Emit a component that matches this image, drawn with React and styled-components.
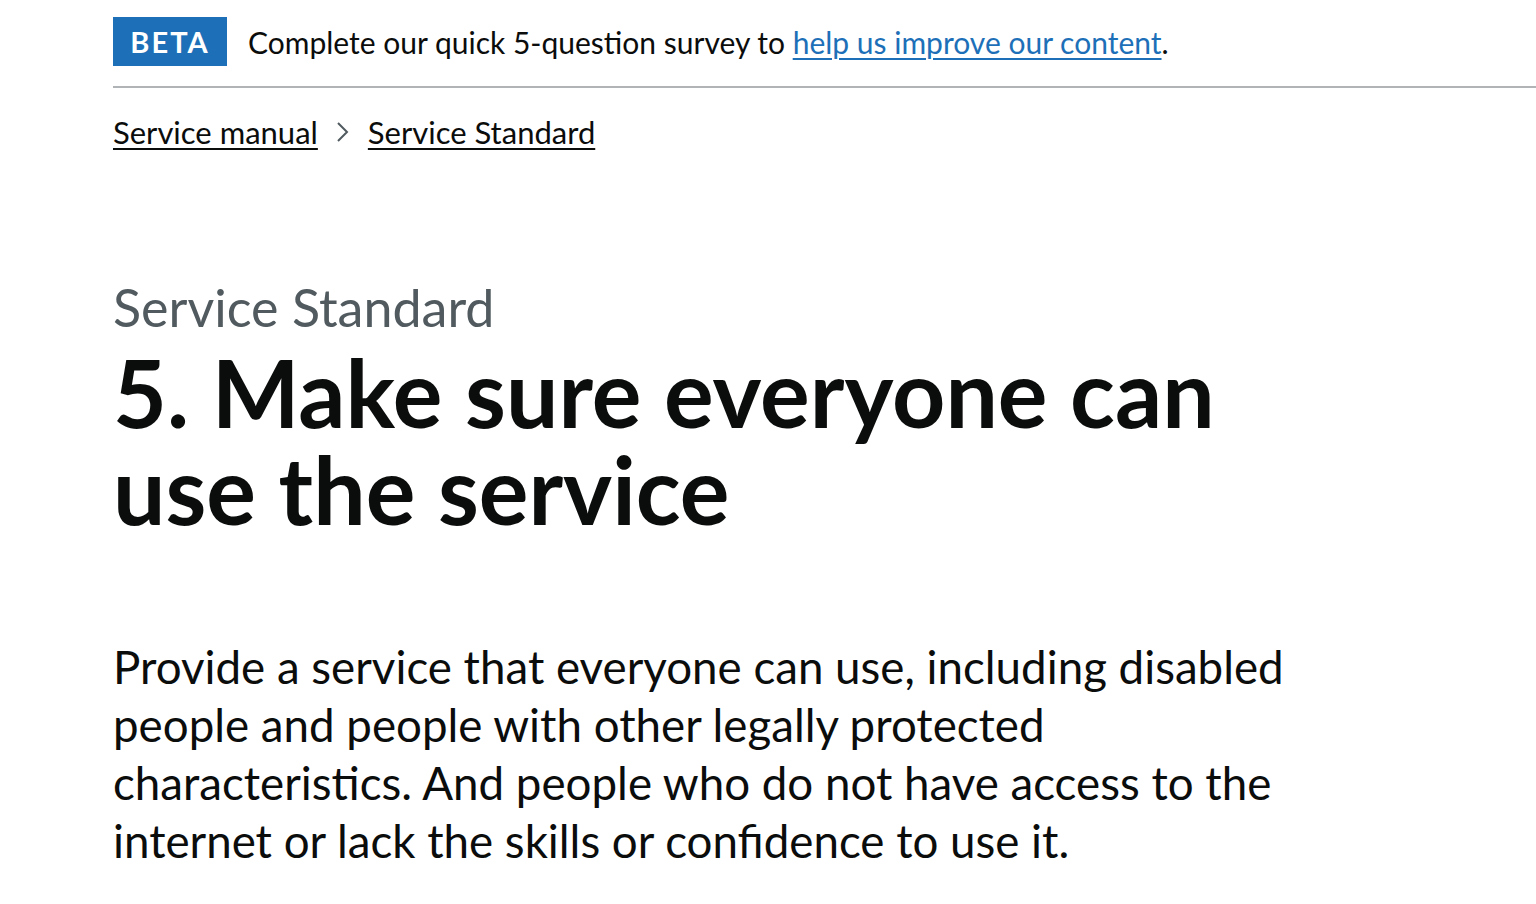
import React from 'react';
import styled, { createGlobalStyle } from 'styled-components';

const GlobalStyle = createGlobalStyle`
  html, body {
    margin: 0;
    padding: 0;
    background: #ffffff;
  }
  body {
    font-family: Lato, "Noto Sans", "Liberation Sans", Arial, sans-serif;
    color: #0b0c0c;
    -webkit-font-smoothing: antialiased;
  }
`;

const Page = styled.div`
  padding-left: 113px;
  overflow: hidden;
`;

const PhaseBanner = styled.div`
  display: flex;
  align-items: center;
  gap: 21px;
  padding: 17px 0 20px;
  border-bottom: 2px solid #b1b4b6;
`;

const Tag = styled.strong`
  display: inline-flex;
  align-items: center;
  justify-content: center;
  width: 114px;
  height: 49px;
  box-sizing: border-box;
  background: #1d70b8;
  color: #ffffff;
  font-size: 29px;
  font-weight: 700;
  letter-spacing: 2px;
`;

const BannerText = styled.span`
  font-size: 30px;
  line-height: 1;
  color: #0b0c0c;
`;

const Link = styled.a`
  color: ${p => (p.$plain ? '#0b0c0c' : '#1d70b8')};
  text-decoration: underline;
  text-decoration-thickness: 2px;
  text-underline-offset: 4px;
`;

const Breadcrumbs = styled.nav`
  display: flex;
  align-items: center;
  gap: 18px;
  margin-top: 25px;
  font-size: 31px;
  line-height: 38px;
`;

const Chevron = styled.svg`
  width: 14px;
  height: 22px;
  flex-shrink: 0;
`;

const Caption = styled.span`
  display: block;
  margin-top: 127px;
  font-size: 52px;
  line-height: 58px;
  color: #505a5f;
`;

const Heading = styled.h1`
  margin: 8px 0 0;
  max-width: 1200px;
  font-size: 93px;
  line-height: 97px;
  font-weight: 700;
`;

const Lead = styled.p`
  margin: 100px 0 0;
  max-width: 1200px;
  font-size: 45.7px;
  line-height: 58px;
`;

export default function App() {
  return (
    <Page>
      <GlobalStyle />
      <PhaseBanner>
        <Tag>BETA</Tag>
        <BannerText>
          Complete our quick 5-question survey to{' '}
          <Link href="#">help us improve our content</Link>.
        </BannerText>
      </PhaseBanner>
      <Breadcrumbs>
        <Link $plain href="#">Service manual</Link>
        <Chevron viewBox="0 0 14 22" fill="none">
          <path d="M2 2 L11 11 L2 20" stroke="#505a5f" strokeWidth="2" />
        </Chevron>
        <Link $plain href="#">Service Standard</Link>
      </Breadcrumbs>
      <Caption>Service Standard</Caption>
      <Heading>5. Make sure everyone can use the service</Heading>
      <Lead>
        Provide a service that everyone can use, including disabled people and
        people with other legally protected characteristics. And people who do
        not have access to the internet or lack the skills or confidence to use it.
      </Lead>
    </Page>
  );
}
